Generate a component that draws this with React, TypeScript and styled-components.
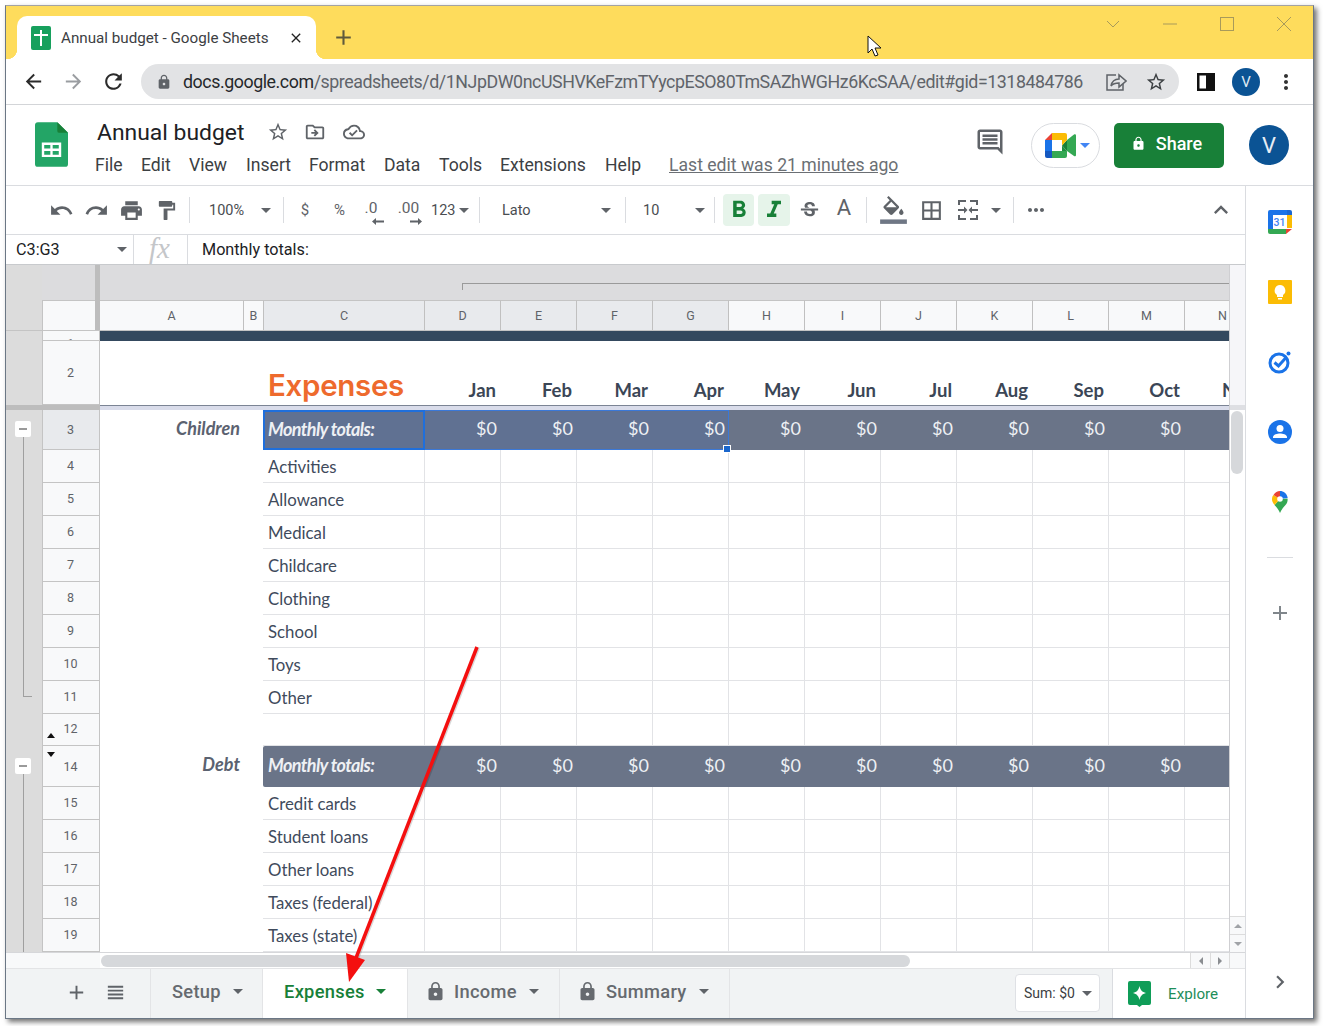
import styled, { createGlobalStyle } from "styled-components";
import {
  MdAdd, MdArrowBack, MdArrowForward, MdBorderAll, MdChevronRight, MdClose, MdFormatBold,
  MdFormatItalic, MdFormatPaint, MdKeyboardArrowUp, MdLock, MdMoreHoriz, MdMoreVert, MdOutlineCloudDone,
  MdOutlineDriveFileMove, MdOutlineInsertComment, MdPrint, MdRedo, MdRefresh, MdStarBorder, MdStrikethroughS,
  MdUndo, MdViewHeadline,
} from "react-icons/md";

const GlobalStyle = createGlobalStyle`
  html, body { margin: 0; padding: 0; background: #fff; }
  * { box-sizing: border-box; }
`;

const Page = styled.div`
  position: relative;
  width: 1323px;
  height: 1026px;
  padding: 5px 0 0 5px;
  overflow: hidden;
  font-family: Roboto, "Liberation Sans", sans-serif;
`;

const Window = styled.div`
  width: 1309px;
  height: 1014px;
  border: 1px solid #6b7785;
  border-top-color: #a3a3a3;
  box-shadow: 3px 3px 5px rgba(0, 0, 0, 0.55);
  background: #fff;
  display: flex;
  flex-direction: column;
`;

/* browser chrome */
const TitleBar = styled.div`
  height: 53px;
  background: #fedc5c;
  padding: 10px 0 0 11px;
  display: flex;
  flex: none;
`;

const BrowserTab = styled.div`
  position: relative;
  width: 299px;
  height: 43px;
  background: #fff;
  border-radius: 10px 10px 0 0;
  display: flex;
  align-items: center;
  padding: 0 0 0 14px;
  color: #3c4043;
  font-size: 15.2px;
  &::before, &::after {
    content: "";
    position: absolute;
    bottom: 0;
    width: 10px;
    height: 10px;
  }
  &::before { left: -10px; background: radial-gradient(circle at 0 0, transparent 10px, #fff 10.5px); }
  &::after { right: -10px; background: radial-gradient(circle at 100% 0, transparent 10px, #fff 10.5px); }
`;

const TabTitle = styled.span`
  margin-left: 10px;
  width: 227px;
  white-space: nowrap;
`;

const NewTab = styled.div`
  margin: 8px 0 0 15px;
  color: #5f5a3c;
  display: flex;
  align-items: center;
  height: 26px;
`;

const WindowControls = styled.div`
  margin-left: auto;
  display: flex;
  margin-top: -2px;
  margin-right: 1px;
  height: 20px;
`;

const ControlBox = styled.div`
  width: 57px;
  display: flex;
  justify-content: center;
  align-items: center;
`;

const NavBar = styled.div`
  height: 46px;
  flex: none;
  border-bottom: 1px solid #d3d5d8;
  display: flex;
  align-items: center;
  padding: 0 0 0 7px;
`;

const NavButton = styled.div<{ $color?: string }>`
  width: 40px;
  display: flex;
  justify-content: center;
  color: ${(props) => props.$color || "#2b2b2b"};
`;

const AddressPill = styled.div`
  width: 1038px;
  height: 35px;
  margin: 0 7px 0 8px;
  border-radius: 18px;
  background: #e2e3e5;
  display: flex;
  align-items: center;
  padding-left: 15px;
  color: #5f6368;
`;

const Url = styled.div`
  margin-left: 11px;
  width: 922px;
  font-size: 17.8px;
  color: #60646a;
  white-space: nowrap;
  letter-spacing: -0.43px;
  b { font-weight: 400; color: #25282b; }
`;

const SmallAvatar = styled.div`
  width: 28px;
  height: 28px;
  margin: 0 6px;
  border-radius: 50%;
  background: #0b5394;
  color: #dfe8f2;
  font-size: 15px;
  display: flex;
  align-items: center;
  justify-content: center;
`;

/* docs header */
const DocHeader = styled.div`
  height: 81px;
  flex: none;
  border-bottom: 1px solid #dadce0;
  display: flex;
  padding: 17px 24px 0 29px;
`;

const TitleColumn = styled.div`
  margin-left: 28px;
  display: flex;
  flex-direction: column;
`;

const DocTitleRow = styled.div`
  display: flex;
  align-items: center;
  height: 24px;
  margin: -2px 0 2px 1px;
  color: #5f6368;
`;

const DocTitle = styled.div`
  font-size: 22.9px;
  color: #202124;
  width: 170px;
  white-space: nowrap;
`;

const TitleIcon = styled.span<{ $w: number }>`
  width: ${(props) => props.$w}px;
  display: flex;
`;

const MenuRow = styled.div`
  display: flex;
  margin: 9px 0 0 -1px;
  font-size: 17.6px;
  color: #3c4043;
  align-items: baseline;
  white-space: nowrap;
`;

const MenuItem = styled.span<{ $w: number }>`
  width: ${(props) => props.$w}px;
`;

const LastEdit = styled.span`
  color: #6b6f74;
  text-decoration: underline;
  margin-left: 8px;
`;

const HeaderRight = styled.div`
  margin-left: auto;
  display: flex;
  align-items: flex-start;
  padding-top: 1px;
`;

const CommentButton = styled.div`
  width: 30px;
  margin-right: 26px;
  margin-top: 4px;
  color: #5f6368;
  display: flex;
`;

const MeetPill = styled.div`
  width: 69px;
  height: 45px;
  border: 1px solid #dadce0;
  border-radius: 23px;
  display: flex;
  align-items: center;
  padding-left: 13px;
  gap: 4px;
`;

const ShareButton = styled.div`
  width: 110px;
  height: 45px;
  margin-left: 14px;
  padding: 0 5px 4px 0;
  background: #188038;
  border-radius: 5px;
  color: #fff;
  font-size: 18px;
  font-weight: 500;
  display: flex;
  align-items: center;
  justify-content: center;
  gap: 10px;
`;

const BigAvatar = styled.div`
  width: 40px;
  height: 40px;
  margin: 2px 0 0 25px;
  border-radius: 50%;
  background: #0b5394;
  color: #e6edf5;
  font-size: 22px;
  display: flex;
  align-items: center;
  justify-content: center;
`;

/* body */
const Body = styled.div`
  flex: 1;
  display: flex;
  min-height: 0;
`;

const Main = styled.div`
  width: 1239px;
  flex: none;
  display: flex;
  flex-direction: column;
`;

const Toolbar = styled.div`
  height: 49px;
  flex: none;
  border-bottom: 1px solid #dadce0;
  display: flex;
  align-items: center;
  padding-left: 38px;
  color: #5f6368;
`;

const ToolButton = styled.div<{ $w?: number; $active?: boolean; $ml?: number }>`
  width: ${(props) => props.$w || 35}px;
  height: 32px;
  margin-left: ${(props) => props.$ml || 0}px;
  flex: none;
  display: flex;
  align-items: center;
  justify-content: center;
  border-radius: 4px;
  background: ${(props) => (props.$active ? "#e6f4ea" : "transparent")};
  color: ${(props) => (props.$active ? "#188038" : "#5f6368")};
  font-size: 15px;
  position: relative;
`;

const LetterA = styled.span`
  font-size: 22px;
  margin-top: -5px;
`;

const Separator = styled.div<{ $ml?: number }>`
  width: 1px;
  height: 26px;
  flex: none;
  margin-left: ${(props) => props.$ml || 0}px;
  background: #dadce0;
`;

const Dropdown = styled.div<{ $w: number; $pl: number; $pr: number }>`
  width: ${(props) => props.$w}px;
  padding: 0 ${(props) => props.$pr}px 0 ${(props) => props.$pl}px;
  flex: none;
  display: flex;
  align-items: center;
  justify-content: space-between;
  font-size: 14.5px;
  color: #4a4d51;
`;

const Caret = styled.span<{ $size?: number; $color?: string; $ml?: number }>`
  flex: none;
  width: 0;
  height: 0;
  margin-left: ${(props) => props.$ml || 0}px;
  border-left: ${(props) => props.$size || 5}px solid transparent;
  border-right: ${(props) => props.$size || 5}px solid transparent;
  border-top: ${(props) => props.$size || 5}px solid ${(props) => props.$color || "#5f6368"};
`;

const DecimalLabel = styled.span<{ $mr?: number }>`
  font-size: 15.5px;
  margin-top: -5px;
  margin-right: ${(props) => props.$mr || 0}px;
`;

const DecimalArrow = styled.svg<{ $left: number }>`
  position: absolute;
  left: ${(props) => props.$left}px;
  bottom: 1px;
`;

const FormulaBar = styled.div`
  height: 30px;
  flex: none;
  border-bottom: 1px solid #c8cacd;
  display: flex;
  align-items: center;
  padding-left: 10px;
  font-size: 16.2px;
  color: #202124;
`;

const NameBox = styled.div`
  width: 118px;
  height: 100%;
  padding-right: 6px;
  border-right: 1px solid #dadce0;
  display: flex;
  align-items: center;
  justify-content: space-between;
`;

const FxLabel = styled.div`
  width: 54px;
  height: 100%;
  border-right: 1px solid #dadce0;
  font-family: "Liberation Serif", serif;
  font-style: italic;
  font-size: 29px;
  color: #c4c6c9;
  padding-left: 15px;
  line-height: 26px;
`;

const FormulaText = styled.div`
  margin-left: 14px;
`;

const GridBody = styled.div`
  height: 687px;
  flex: none;
  display: flex;
  background: #fff;
`;

const Rail = styled.div`
  width: 36px;
  flex: none;
  position: relative;
  background: #dcdcdc;
`;

const RailStrip = styled.div`
  position: absolute;
  left: 0;
  right: 0;
  top: 140px;
  height: 5px;
  background: #bdbdbd;
`;

const RailRule = styled.div`
  position: absolute;
  left: 0;
  right: 0;
  top: 65px;
  height: 1px;
  background: #c4c4c4;
`;

const Minus = styled.div<{ $top: number }>`
  position: absolute;
  left: 9px;
  top: ${(props) => props.$top}px;
  width: 16px;
  height: 16px;
  border-radius: 2px;
  background: #fff;
  display: flex;
  align-items: center;
  justify-content: center;
  &::after {
    content: "";
    width: 8px;
    height: 2px;
    background: #9a9a9a;
  }
`;

const RailLine = styled.div<{ $top: number; $h: number; $hook?: boolean }>`
  position: absolute;
  left: 17px;
  top: ${(props) => props.$top}px;
  height: ${(props) => props.$h}px;
  width: ${(props) => (props.$hook ? 9 : 1)}px;
  border-left: 1px solid #9f9f9f;
  border-bottom: ${(props) => (props.$hook ? "1px solid #9f9f9f" : "none")};
`;

const SheetArea = styled.div`
  flex: 1;
  min-width: 0;
  overflow: hidden;
  position: relative;
`;

const GroupBar = styled.div`
  height: 35px;
  background: #dcdcde;
  display: flex;
`;

const CornerGap = styled.div`
  width: 53px;
  flex: none;
`;

const FrozenBar = styled.div`
  width: 5px;
  flex: none;
  background: #bdbdbd;
`;

const GroupBracket = styled.div`
  flex: 1;
  height: 7px;
  margin: 18px 0 0 362px;
  border-top: 1px solid #9a9a9a;
  border-left: 1px solid #9a9a9a;
`;

const ColumnRow = styled.div`
  height: 31px;
  display: flex;
  border-bottom: 1px solid #c4c4c4;
`;

const Corner = styled.div`
  width: 53px;
  flex: none;
  background: #f8f9fa;
  border-top: 1px solid #c4c4c4;
  border-left: 1px solid #c4c4c4;
`;

const ColumnHead = styled.div<{ $w: number; $sel: boolean }>`
  width: ${(props) => props.$w}px;
  flex: none;
  display: flex;
  align-items: center;
  justify-content: center;
  font-size: 12.5px;
  color: #5f6368;
  background: ${(props) => (props.$sel ? "#e8eaed" : "#f8f9fa")};
  border-top: 1px solid #c4c4c4;
  border-right: 1px solid #c0c0c0;
`;

const Row = styled.div<{ $h: number }>`
  height: ${(props) => props.$h}px;
  display: flex;
`;

const RowHead = styled.div<{ $sel?: boolean; $clip?: boolean; $item?: boolean }>`
  width: 58px;
  flex: none;
  overflow: hidden;
  display: flex;
  justify-content: center;
  align-items: ${(props) => (props.$clip ? "flex-start" : "center")};
  padding-top: ${(props) => (props.$clip ? 5 : 0)}px;
  padding-right: 1px;
  padding-bottom: ${(props) => (props.$item ? 2 : 0)}px;
  font-size: 12.5px;
  color: #5f6368;
  background: ${(props) => (props.$sel ? "#e8eaed" : "#f8f9fa")};
  border-left: 1px solid #c4c4c4;
  border-right: 1px solid #c4c4c4;
  border-bottom: 1px solid #c4c4c4;
`;

const Cell = styled.div<{ $w: number; $grid?: boolean; $end?: boolean }>`
  width: ${(props) => props.$w}px;
  flex: none;
  display: flex;
  align-items: ${(props) => (props.$end ? "flex-end" : "center")};
  padding: 0 4px 0 5px;
  white-space: nowrap;
  font-family: Lato, "Liberation Sans", sans-serif;
  font-size: 16.8px;
  color: #3f4b5c;
  border-right: ${(props) => (props.$grid ? "1px solid #e2e3e6" : "none")};
  border-bottom: ${(props) => (props.$grid ? "1px solid #e2e3e6" : "none")};
`;

const GroupLabel = styled(Cell)`
  justify-content: flex-end;
  padding-right: 4px;
  font-size: 18px;
  font-weight: 700;
  font-style: italic;
  color: #5b6270;
  padding-bottom: 5px;
`;

const BandCell = styled(Cell)<{ $sel: boolean; $right?: boolean; $first?: boolean }>`
  background: ${(props) => (props.$sel ? "#607192" : "#6a7488")};
  color: #eef0f4;
  font-size: 18px;
  border-radius: ${(props) => (props.$first ? "2px 0 0 2px" : "0")};
  justify-content: ${(props) => (props.$right ? "flex-end" : "flex-start")};
  padding-bottom: ${(props) => (props.$right ? 4 : 3)}px;
  padding-right: 4px;
  font-weight: ${(props) => (props.$right ? 400 : 700)};
  font-style: ${(props) => (props.$right ? "normal" : "italic")};
  letter-spacing: ${(props) => (props.$right ? "0" : "-0.6px")};
`;

const NavyRow = styled.div`
  flex: 1;
  background: #34495e;
`;

const TitleCell = styled(Cell)`
  justify-content: flex-start;
  font-family: Inter, Lato, sans-serif;
  font-weight: 600;
  font-size: 29.5px;
  letter-spacing: -0.3px;
  color: #ee6a2d;
  line-height: 40px;
  padding-bottom: 0;
`;

const MonthCell = styled(Cell)`
  justify-content: flex-end;
  font-weight: 700;
  color: #3b4656;
  font-size: 18.5px;
  padding: 0 5px 4px 0;
`;

const FreezeRow = styled.div`
  height: 5px;
  display: flex;
`;

const FreezeHead = styled.div`
  width: 58px;
  flex: none;
  background: #bdbdbd;
`;

const FreezeBody = styled.div`
  flex: 1;
  background: #d9dcea;
  border-top: 1px solid #7b8494;
`;

const Selection = styled.div`
  position: absolute;
  left: 221px;
  top: 145px;
  width: 466px;
  height: 40px;
  border: 1px solid #3a78d8;
`;

const ActiveCell = styled.div`
  position: absolute;
  left: 221px;
  top: 145px;
  width: 162px;
  height: 40px;
  border: 2px solid #1f6fdc;
`;

const FillHandle = styled.div`
  position: absolute;
  left: 681px;
  top: 180px;
  width: 8px;
  height: 8px;
  background: #1a66cc;
  border: 1px solid #fff;
`;

/* the small triangles that sit on the row head where row 13 is hidden */
const HiddenRowMark = styled.span<{ $top: number; $up?: boolean }>`
  position: absolute;
  left: 5px;
  top: ${(props) => props.$top}px;
  width: 0;
  height: 0;
  border-left: 4px solid transparent;
  border-right: 4px solid transparent;
  ${(props) => (props.$up ? "border-bottom" : "border-top")}: 5px solid #111;
`;

const VScroll = styled.div`
  width: 16px;
  flex: none;
  border-left: 1px solid #cfcfd2;
  display: flex;
  flex-direction: column;
  background: #fff;
`;

const VScrollTop = styled.div`
  height: 145px;
  background: #f6f6f9;
  border-bottom: 5px solid #dedfe3;
  flex: none;
`;

const VThumb = styled.div`
  width: 12px;
  height: 63px;
  margin: 1px 0 0 1px;
  border-radius: 6px;
  background: #d6d8db;
`;

const ScrollButton = styled.div<{ $push?: boolean }>`
  height: 18px;
  flex: none;
  margin-top: ${(props) => (props.$push ? "auto" : "0")};
  display: flex;
  align-items: center;
  justify-content: center;
  border-top: 1px solid #dcdcdc;
  background: #f8f9fa;
`;

const UpCaret = styled.span`
  width: 0;
  height: 0;
  border-left: 4px solid transparent;
  border-right: 4px solid transparent;
  border-bottom: 4px solid #a0a3a7;
`;

const HScrollRow = styled.div`
  height: 16px;
  flex: none;
  display: flex;
  border-top: 1px solid #d6d7da;
  background: #fff;
`;

const HScrollLeft = styled.div`
  width: 94px;
  flex: none;
  background: #f8f9fa;
`;

const HThumb = styled.div`
  width: 809px;
  height: 12px;
  margin: 2px 0 0 1px;
  border-radius: 6px;
  background: #d6d8db;
`;

const HButtons = styled.div`
  margin-left: auto;
  display: flex;
`;

const HButton = styled.div<{ $w: number }>`
  width: ${(props) => props.$w}px;
  display: flex;
  align-items: center;
  justify-content: center;
  border-left: 1px solid #dcdcdc;
  background: #f8f9fa;
`;

const SideCaret = styled.span<{ $dir: "left" | "right" }>`
  width: 0;
  height: 0;
  border-top: 4px solid transparent;
  border-bottom: 4px solid transparent;
  ${(props) => (props.$dir === "left" ? "border-right" : "border-left")}: 4px solid #8a8d91;
`;

const SheetTabs = styled.div`
  flex: 1;
  min-height: 0;
  display: flex;
  align-items: stretch;
  background: #f1f3f4;
  border-top: 1px solid #e3e4e6;
  color: #5f6368;
`;

const TabTool = styled.div<{ $w: number }>`
  width: ${(props) => props.$w}px;
  flex: none;
  padding-bottom: 3px;
  display: flex;
  align-items: center;
  justify-content: center;
`;

const SheetTab = styled.div<{ $w: number; $active?: boolean; $pl: number; $first?: boolean }>`
  width: ${(props) => props.$w}px;
  flex: none;
  display: flex;
  align-items: center;
  padding-left: ${(props) => props.$pl}px;
  padding-bottom: 4px;
  font-size: 18.3px;
  font-weight: 500;
  letter-spacing: 0.3px;
  border-left: ${(props) => (props.$first ? "1px solid #e3e4e6" : "none")};
  border-right: 1px solid #e3e4e6;
  background: ${(props) => (props.$active ? "#fff" : "transparent")};
  color: ${(props) => (props.$active ? "#188038" : "#666a6f")};
`;

const TabLock = styled(MdLock)`
  margin-right: 8px;
`;

const SumBox = styled.div`
  margin: 5px 0 0 auto;
  width: 85px;
  height: 38px;
  background: #fff;
  border: 1px solid #dfe1e5;
  border-radius: 4px;
  display: flex;
  align-items: center;
  justify-content: space-between;
  padding: 0 7px 0 8px;
  font-size: 14px;
  color: #3c4043;
`;

const ExplorePanel = styled.div`
  margin-left: 12px;
  width: 133px;
  flex: none;
  display: flex;
  align-items: center;
  background: #fff;
  border-left: 1px solid #dadce0;
  padding-left: 15px;
  color: #1e8e5a;
  font-size: 15.2px;
  gap: 17px;
`;

const Sidebar = styled.div`
  flex: 1;
  border-left: 1px solid #dadce0;
  display: flex;
  flex-direction: column;
  align-items: center;
  padding-top: 24px;
`;

const SideIcon = styled.div<{ $pt?: number }>`
  height: 70px;
  flex: none;
  display: flex;
  justify-content: center;
  padding-top: ${(props) => props.$pt || 0}px;
`;

const SideDivider = styled.div`
  width: 26px;
  height: 1px;
  background: #dadce0;
  margin-top: -3px;
  margin-bottom: 43px;
`;

const SideBottom = styled.div`
  margin-top: auto;
  height: 50px;
  padding-top: 1px;
  color: #5f6368;
  display: flex;
  align-items: flex-start;
`;

const Overlay = styled.svg`
  position: absolute;
  left: 0;
  top: 0;
  pointer-events: none;
`;

const headColumns = [
  { name: "A", w: 144 },
  { name: "B", w: 20 },
  { name: "C", w: 161 },
  ...["D", "E", "F", "G", "H", "I", "J", "K", "L", "M", "N"].map((name) => ({ name, w: 76 })),
];
const months = ["Jan", "Feb", "Mar", "Apr", "May", "Jun", "Jul", "Aug", "Sep", "Oct", "Nov"];
const menus: [string, number][] = [
  ["File", 46], ["Edit", 48], ["View", 57], ["Insert", 63], ["Format", 75], ["Data", 55],
  ["Tools", 61], ["Extensions", 105], ["Help", 56],
];

interface IRow {
  n: number;
  h: number;
  kind: "item" | "band";
  label?: string;
  group?: string;
}

const rows: IRow[] = [
  { n: 3, h: 40, kind: "band", group: "Children" },
  { n: 4, h: 33, kind: "item", label: "Activities" },
  { n: 5, h: 33, kind: "item", label: "Allowance" },
  { n: 6, h: 33, kind: "item", label: "Medical" },
  { n: 7, h: 33, kind: "item", label: "Childcare" },
  { n: 8, h: 33, kind: "item", label: "Clothing" },
  { n: 9, h: 33, kind: "item", label: "School" },
  { n: 10, h: 33, kind: "item", label: "Toys" },
  { n: 11, h: 33, kind: "item", label: "Other" },
  { n: 12, h: 32, kind: "item" },
  { n: 14, h: 41, kind: "band", group: "Debt" },
  { n: 15, h: 33, kind: "item", label: "Credit cards" },
  { n: 16, h: 33, kind: "item", label: "Student loans" },
  { n: 17, h: 33, kind: "item", label: "Other loans" },
  { n: 18, h: 33, kind: "item", label: "Taxes (federal)" },
  { n: 19, h: 33, kind: "item", label: "Taxes (state)" },
];

function SheetsLogo() {
  return (
    <svg width="33" height="45" viewBox="0 0 34 46">
      <path d="M3 0h20l11 11v32a3 3 0 0 1-3 3H3a3 3 0 0 1-3-3V3a3 3 0 0 1 3-3z" fill="#23a566" />
      <path d="M23 0l11 11H25a2 2 0 0 1-2-2z" fill="#188038" />
      <path d="M7 21h20v15H7z M9.500 23.500v3.700h6.300v-3.700z M18.200 23.500v3.700h6.300v-3.700z M9.500 29.600v3.900h6.300v-3.900z M18.200 29.600v3.900h6.300v-3.900z" fill="#fff" fillRule="evenodd" />
    </svg>
  );
}

function MeetLogo() {
  return (
    <svg width="31" height="25" viewBox="0 0 31 25">
      <path d="M0 7l7-7v7z" fill="#ea4335" />
      <path d="M7 0h13a2 2 0 0 1 2 2v5H7z" fill="#fbbc04" />
      <path d="M0 7h7v11H0z" fill="#1a73e8" />
      <path d="M0 18h7v7H2a2 2 0 0 1-2-2z" fill="#1558c0" />
      <path d="M7 18h15v5a2 2 0 0 1-2 2H7z" fill="#34a853" />
      <path d="M22 7v11l-5-5.500z" fill="#188038" />
      <path d="M22 7l7-5.500c1-.6 2 0 2 1V22c0 1-1 1.600-2 1l-7-5z" fill="#34a853" />
      <path d="M17 7l5 0-5 5.500z" fill="#fbbc04" />
      <path d="M17 18l5 0-5-5.500z" fill="#1e8e3e" />
    </svg>
  );
}

function FillColorIcon() {
  return (
    <svg width="27" height="29" viewBox="0 0 24 26">
      <path d="M16.560 8.940L7.620 0 6.210 1.410l2.380 2.380-5.150 5.150c-.59.59-.59 1.540 0 2.120l5.500 5.500c.29.29.68.44 1.060.44s.77-.15 1.060-.44l5.500-5.500c.59-.58.59-1.530 0-2.120zM5.210 10L10 5.210 14.790 10H5.210zM19 11.500s-2 2.170-2 3.500c0 1.100.9 2 2 2s2-.9 2-2c0-1.330-2-3.500-2-3.500z" fill="#5f6368" />
      <rect x="0" y="21" width="24" height="4" fill="#6f7785" />
    </svg>
  );
}

function MergeIcon() {
  return (
    <svg width="22" height="22" viewBox="0 0 22 22" fill="#5f6368">
      <path d="M1 1h8v2H3v3H1z M13 1h8v5h-2V3h-6z M1 16h2v3h6v2H1z M19 16h2v5h-8v-2h6z" />
      <path d="M1 10h6V7.500l3.500 3.500L7 14.500V12H1z M21 10h-6V7.500L11.500 11l3.500 3.500V12h6z" />
    </svg>
  );
}

function CalendarIcon() {
  return (
    <svg width="24" height="24" viewBox="0 0 24 24">
      <path d="M1 5h22v14l-5 5H1z" fill="#fff" />
      <path d="M2 0h17v5H5v14H0V2a2 2 0 0 1 2-2z" fill="#1a73e8" />
      <path d="M19 0h3a2 2 0 0 1 2 2v3h-5z" fill="#1967d2" />
      <path d="M19 5h5v13h-5z" fill="#fbbc04" />
      <path d="M0 19h18v5H2a2 2 0 0 1-2-2z" fill="#34a853" />
      <path d="M18 19h6l-6 5z" fill="#ea4335" />
      <text x="11.500" y="16" fontSize="10.500" textAnchor="middle" fill="#4285f4" fontFamily="Roboto, sans-serif" fontWeight="500">31</text>
    </svg>
  );
}

function KeepIcon() {
  return (
    <svg width="24" height="24" viewBox="0 0 24 24">
      <rect width="24" height="24" rx="1" fill="#fbbc04" />
      <path d="M12 5a5.500 5.500 0 0 0-3 10v2h6v-2a5.500 5.500 0 0 0-3-10z" fill="#fff" />
      <rect x="10" y="18" width="4" height="1.500" fill="#fff" />
    </svg>
  );
}

function TasksIcon() {
  return (
    <svg width="24" height="24" viewBox="0 0 24 24">
      <circle cx="11" cy="13" r="9" fill="none" stroke="#1a73e8" strokeWidth="3" />
      <path d="M6.500 12.500l4 3.500 8-9" fill="none" stroke="#1a73e8" strokeWidth="3" />
      <circle cx="20.500" cy="3.500" r="2" fill="#1a73e8" />
    </svg>
  );
}

function ContactsIcon() {
  return (
    <svg width="24" height="24" viewBox="0 0 24 24">
      <circle cx="12" cy="12" r="12" fill="#1a73e8" />
      <circle cx="12" cy="8.500" r="3.500" fill="#fff" />
      <path d="M5 17c0-2.500 4.500-3.500 7-3.500s7 1 7 3.500v1H5z" fill="#fff" />
    </svg>
  );
}

function MapsIcon() {
  return (
    <svg width="16" height="22" viewBox="0 0 16 22">
      <path d="M8 22c-1-3-3-5-5.500-8L8 8z" fill="#34a853" />
      <path d="M8 22c1-3 3-5 5.500-8C15 12.500 16 10 15.500 7.500L8 8z" fill="#34a853" />
      <path d="M2.500 14C.5 11.500 0 10 0 8c0-1.500.5-3 1.500-4L8 8z" fill="#fbbc04" />
      <path d="M1.500 4C3 1.500 5.500 0 8 0l2 3-2 5z" fill="#ea4335" />
      <path d="M8 0c3.500 0 7 2.500 7.700 7L8 8z" fill="#1a73e8" />
      <circle cx="8" cy="8" r="2.800" fill="#fff" />
    </svg>
  );
}

function App() {
  return (
    <Page>
      <GlobalStyle />
      <Window>
        <TitleBar>
          <BrowserTab>
            <svg width="20" height="24" viewBox="0 0 20 24">
              <rect width="20" height="24" rx="2" fill="#17a05d" />
              <path d="M3 8h6V4h2v4h6v2h-6v10H9V10H3z" fill="#fff" />
            </svg>
            <TabTitle>Annual budget - Google Sheets</TabTitle>
            <MdClose size={16} color="#222" />
          </BrowserTab>
          <NewTab><MdAdd size={25} /></NewTab>
          <WindowControls>
            <ControlBox>
              <svg width="14" height="8" viewBox="0 0 14 8"><path d="M1 1l6 6 6-6" fill="none" stroke="#a89a5a" /></svg>
            </ControlBox>
            <ControlBox>
              <svg width="14" height="2" viewBox="0 0 14 2"><path d="M0 1h14" stroke="#a89a5a" /></svg>
            </ControlBox>
            <ControlBox>
              <svg width="14" height="14" viewBox="0 0 14 14"><rect x=".5" y=".5" width="13" height="13" fill="none" stroke="#a89a5a" /></svg>
            </ControlBox>
            <ControlBox>
              <svg width="14" height="14" viewBox="0 0 14 14"><path d="M0 0l14 14M14 0L0 14" stroke="#a89a5a" /></svg>
            </ControlBox>
          </WindowControls>
        </TitleBar>

        <NavBar>
          <NavButton><MdArrowBack size={23} /></NavButton>
          <NavButton $color="#9a9da1"><MdArrowForward size={23} /></NavButton>
          <NavButton><MdRefresh size={25} /></NavButton>
          <AddressPill>
            <MdLock size={16} />
            <Url><b>docs.google.com</b>/spreadsheets/d/1NJpDW0ncUSHVKeFzmTYycpESO80TmSAZhWGHz6KcSAA/edit#gid=1318484786</Url>
            <svg width="22" height="20" viewBox="0 0 22 20" fill="none" stroke="#5f6368" strokeWidth="1.500">
              <path d="M11 3H2v15h16v-6" />
              <path d="M6 14c1-5 4-7 8-7V3l7 6-7 6v-4c-3 0-6 .5-8 3z" />
            </svg>
            <svg width="22" height="22" viewBox="0 0 24 24" style={{ marginLeft: 18 }} fill="#3c4043"><path d="M22 9.240l-7.190-.62L12 2 9.190 8.630 2 9.240l5.460 4.730L5.820 21 12 17.270 18.180 21l-1.630-7.030L22 9.240zM12 15.400l-3.760 2.270 1-4.280-3.320-2.880 4.380-.38L12 6.100l1.710 4.040 4.380.38-3.320 2.880 1 4.280L12 15.400z" /></svg>
          </AddressPill>
          <NavButton>
            <svg width="18" height="18" viewBox="0 0 18 18"><path d="M0 0h18v18H0z M2.500 2.500v13H9v-13z" fill="#111" fillRule="evenodd" /></svg>
          </NavButton>
          <SmallAvatar>V</SmallAvatar>
          <NavButton $color="#333"><MdMoreVert size={24} /></NavButton>
        </NavBar>

        <DocHeader>
          <SheetsLogo />
          <TitleColumn>
            <DocTitleRow>
              <DocTitle>Annual budget</DocTitle>
              <TitleIcon $w={37}><MdStarBorder size={22} /></TitleIcon>
              <TitleIcon $w={39}><MdOutlineDriveFileMove size={22} /></TitleIcon>
              <TitleIcon $w={24}><MdOutlineCloudDone size={22} /></TitleIcon>
            </DocTitleRow>
            <MenuRow>
              {menus.map(([name, w]) => <MenuItem key={name} $w={w}>{name}</MenuItem>)}
              <LastEdit>Last edit was 21 minutes ago</LastEdit>
            </MenuRow>
          </TitleColumn>
          <HeaderRight>
            <CommentButton><MdOutlineInsertComment size={30} /></CommentButton>
            <MeetPill>
              <MeetLogo />
              <Caret $size={5} $color="#4285f4" />
            </MeetPill>
            <ShareButton><MdLock size={15} />Share</ShareButton>
            <BigAvatar>V</BigAvatar>
          </HeaderRight>
        </DocHeader>

        <Body>
          <Main>
            <Toolbar>
              <ToolButton><MdUndo size={25} /></ToolButton>
              <ToolButton><MdRedo size={25} /></ToolButton>
              <ToolButton><MdPrint size={25} /></ToolButton>
              <ToolButton><MdFormatPaint size={23} /></ToolButton>
              <Separator $ml={5} />
              <Dropdown $w={93} $pl={19} $pr={12}>100%<Caret /></Dropdown>
              <Separator />
              <ToolButton $w={34} $ml={4}>$</ToolButton>
              <ToolButton $w={35}>%</ToolButton>
              <ToolButton $w={34}>
                <DecimalLabel $mr={6}>.0</DecimalLabel>
                <DecimalArrow $left={15} width="12" height="7" viewBox="0 0 12 7"><path d="M0 3.500L4 0v2.500h8v2H4V7z" fill="#5f6368" /></DecimalArrow>
              </ToolButton>
              <ToolButton $w={35}>
                <DecimalLabel>.00</DecimalLabel>
                <DecimalArrow $left={19} width="12" height="7" viewBox="0 0 12 7"><path d="M12 3.500L8 0v2.500H0v2h8V7z" fill="#5f6368" /></DecimalArrow>
              </ToolButton>
              <Dropdown $w={53} $pl={5} $pr={10}>123<Caret /></Dropdown>
              <Separator />
              <Dropdown $w={145} $pl={22} $pr={14}>Lato<Caret /></Dropdown>
              <Separator />
              <Dropdown $w={88} $pl={17} $pr={9}>10<Caret /></Dropdown>
              <Separator />
              <ToolButton $w={31} $ml={8} $active><MdFormatBold size={28} /></ToolButton>
              <ToolButton $w={32} $ml={4} $active><MdFormatItalic size={28} /></ToolButton>
              <ToolButton $w={36} $ml={1}><MdStrikethroughS size={23} /></ToolButton>
              <ToolButton $w={34}><LetterA>A</LetterA></ToolButton>
              <Separator $ml={5} />
              <ToolButton $w={34} $ml={9}><FillColorIcon /></ToolButton>
              <ToolButton $w={34} $ml={4}><MdBorderAll size={25} /></ToolButton>
              <ToolButton $w={34} $ml={3}><MergeIcon /></ToolButton>
              <Caret $ml={6} />
              <Separator $ml={12} />
              <ToolButton $w={44}><MdMoreHoriz size={24} /></ToolButton>
              <ToolButton $w={30} $ml={148}><MdKeyboardArrowUp size={28} /></ToolButton>
            </Toolbar>

            <FormulaBar>
              <NameBox>C3:G3<Caret /></NameBox>
              <FxLabel>fx</FxLabel>
              <FormulaText>Monthly totals:</FormulaText>
            </FormulaBar>

            <GridBody>
              <Rail>
                <RailRule />
                <RailStrip />
                <Minus $top={156} />
                <RailLine $top={172} $h={260} $hook />
                <Minus $top={493} />
                <RailLine $top={509} $h={178} />
              </Rail>
              <SheetArea>
                <GroupBar>
                  <CornerGap />
                  <FrozenBar />
                  <GroupBracket />
                </GroupBar>
                <ColumnRow>
                  <Corner />
                  <FrozenBar />
                  {headColumns.map((col, i) => (
                    <ColumnHead key={col.name} $w={col.w} $sel={i >= 2 && i <= 6}>{col.name}</ColumnHead>
                  ))}
                </ColumnRow>
                <Row $h={10}>
                  <RowHead $clip>1</RowHead>
                  <NavyRow />
                </Row>
                <Row $h={64}>
                  <RowHead>2</RowHead>
                  <Cell $w={163} />
                  <TitleCell $w={162} $end>Expenses</TitleCell>
                  {months.map((m) => <MonthCell key={m} $w={76} $end>{m}</MonthCell>)}
                </Row>
                <FreezeRow>
                  <FreezeHead />
                  <FreezeBody />
                </FreezeRow>
                {rows.map((row) => (
                  <Row key={row.n} $h={row.h}>
                    <RowHead $sel={row.n === 3} $item={row.kind === "item"}>{row.n}</RowHead>
                    <GroupLabel $w={144}>{row.group}</GroupLabel>
                    <Cell $w={19} />
                    {row.kind === "band" ? (
                      <>
                        <BandCell $w={162} $sel={row.n === 3} $first>Monthly totals:</BandCell>
                        {months.map((m, i) => (
                          <BandCell key={m} $w={76} $sel={row.n === 3 && i < 4} $right>$0</BandCell>
                        ))}
                      </>
                    ) : (
                      <>
                        <Cell $w={162} $grid>{row.label}</Cell>
                        {months.map((m) => <Cell key={m} $w={76} $grid />)}
                      </>
                    )}
                  </Row>
                ))}
                <Selection />
                <ActiveCell />
                <FillHandle />
                <HiddenRowMark $top={468} $up />
                <HiddenRowMark $top={487} />
              </SheetArea>
              <VScroll>
                <VScrollTop />
                <VThumb />
                <ScrollButton $push><UpCaret /></ScrollButton>
                <ScrollButton><Caret $size={4} $color="#a0a3a7" /></ScrollButton>
              </VScroll>
            </GridBody>

            <HScrollRow>
              <HScrollLeft />
              <HThumb />
              <HButtons>
                <HButton $w={20}><SideCaret $dir="left" /></HButton>
                <HButton $w={19}><SideCaret $dir="right" /></HButton>
                <HButton $w={16} />
              </HButtons>
            </HScrollRow>

            <SheetTabs>
              <TabTool $w={50} />
              <TabTool $w={41}><MdAdd size={23} /></TabTool>
              <TabTool $w={37}><MdViewHeadline size={23} /></TabTool>
              <TabTool $w={16} />
              <SheetTab $w={113} $pl={21} $first>Setup<Caret $ml={12} $size={5} /></SheetTab>
              <SheetTab $w={145} $pl={21} $active>Expenses<Caret $ml={11} $size={5} $color="#188038" /></SheetTab>
              <SheetTab $w={152} $pl={17}><TabLock size={21} />Income<Caret $ml={12} $size={5} /></SheetTab>
              <SheetTab $w={170} $pl={17}><TabLock size={21} />Summary<Caret $ml={12} $size={5} /></SheetTab>
              <SumBox>Sum: $0<Caret /></SumBox>
              <ExplorePanel>
                <svg width="23" height="26" viewBox="0 0 23 26">
                  <path d="M2 0h19a2 2 0 0 1 2 2v20a2 2 0 0 1-2 2h-7l-2.500 2L9 24H2a2 2 0 0 1-2-2V2a2 2 0 0 1 2-2z" fill="#0f9d58" />
                  <path d="M11.500 5c1 4 2.500 6 6.500 7-4 1-5.500 3-6.500 7-1-4-2.500-6-6.500-7 4-1 5.500-3 6.500-7z" fill="#fff" />
                </svg>
                Explore
              </ExplorePanel>
            </SheetTabs>
          </Main>

          <Sidebar>
            <SideIcon><CalendarIcon /></SideIcon>
            <SideIcon><KeepIcon /></SideIcon>
            <SideIcon><TasksIcon /></SideIcon>
            <SideIcon><ContactsIcon /></SideIcon>
            <SideIcon $pt={1}><MapsIcon /></SideIcon>
            <SideDivider />
            <MdAdd size={24} color="#80868b" />
            <SideBottom><MdChevronRight size={26} /></SideBottom>
          </Sidebar>
        </Body>
      </Window>

      <Overlay width="1323" height="1026" viewBox="0 0 1323 1026">
        <path d="M478.500 648L357.500 959" stroke="#000" strokeOpacity=".15" strokeWidth="3" />
        <path d="M477 647L356 958" stroke="#f40f0f" strokeWidth="3.500" />
        <path d="M349 982l-3-29 19 7z" fill="#f40f0f" />
        <path d="M868 36v17l4-4 3 7 3-1-3-7h6z" fill="#fff" stroke="#111" strokeWidth="1" />
      </Overlay>
    </Page>
  );
}

export default App;
